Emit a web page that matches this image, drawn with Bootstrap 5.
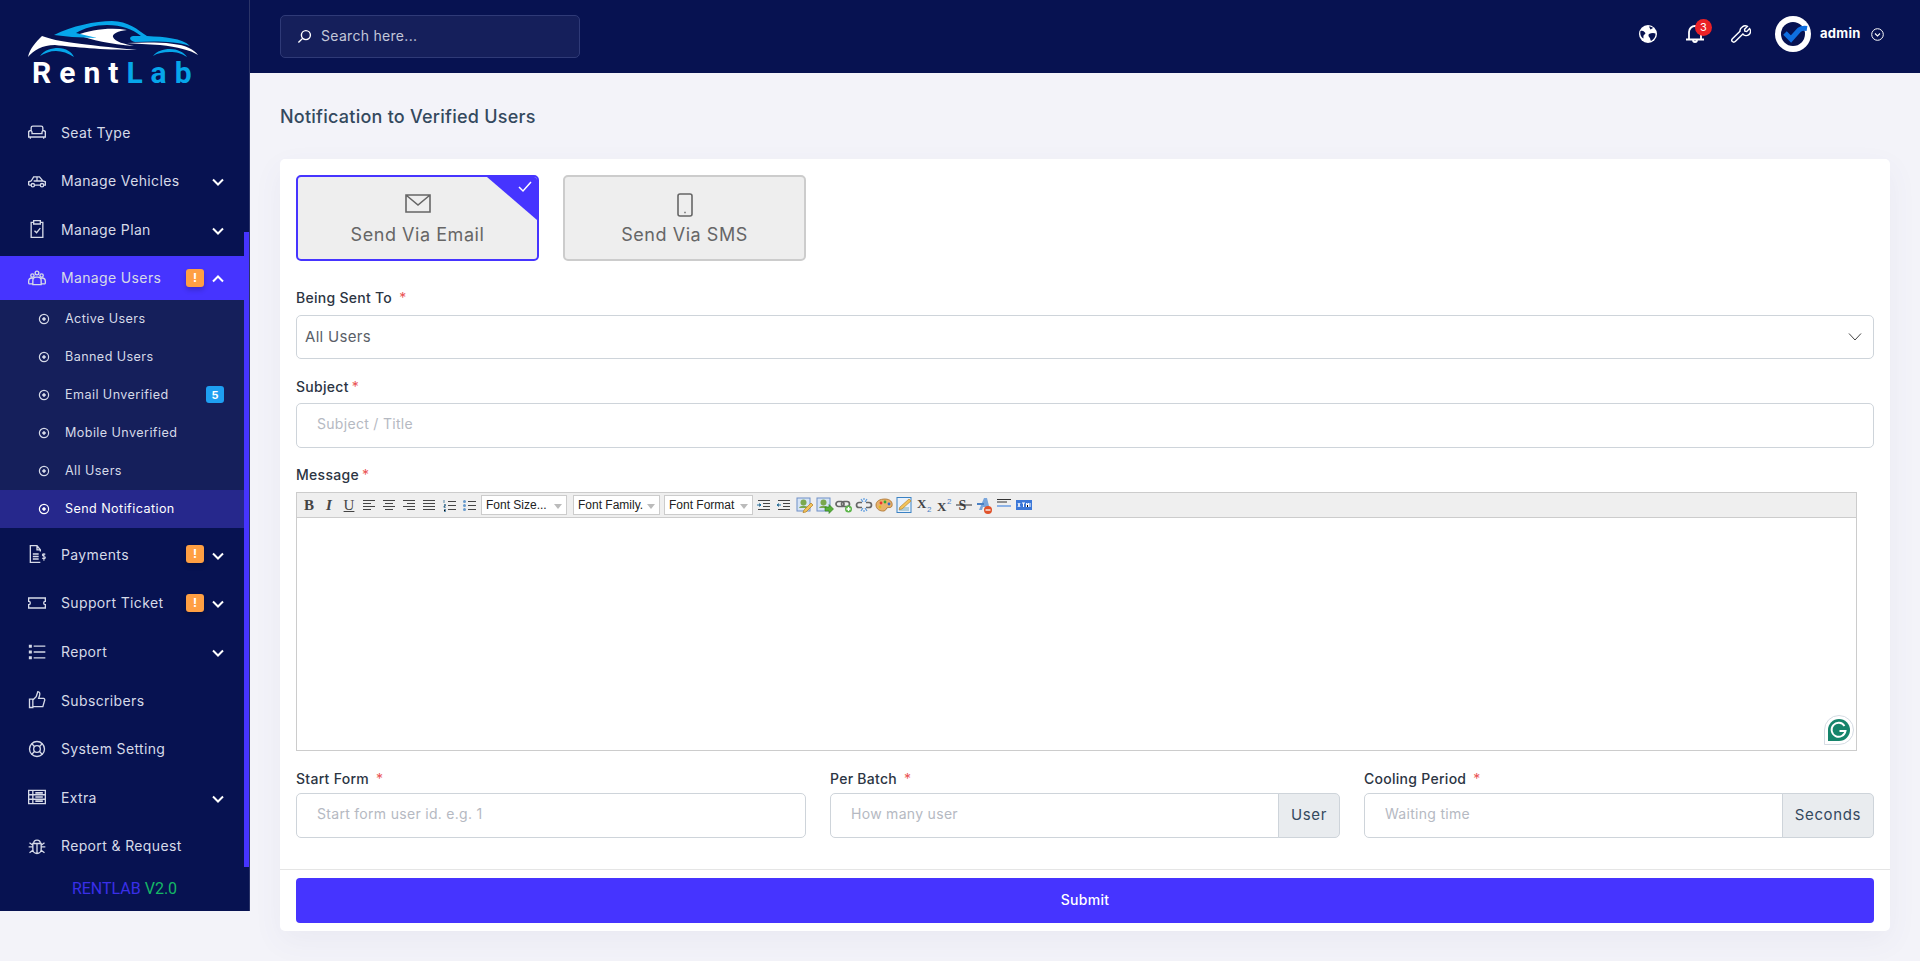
<!DOCTYPE html>
<html lang="en"><head><meta charset="utf-8"><title>RentLab</title>
<link href="https://cdn.jsdelivr.net/npm/bootstrap@5.3.0/dist/css/bootstrap.min.css" rel="stylesheet">
<style>
body{font-family:Inter,"Noto Sans",sans-serif;background:#f3f3f9;font-size:14px;color:#34495e;height:961px;overflow:hidden}
.side-panel{width:250px;height:911px;background:#071251;border-right:1px solid #2b3468;flex:none;position:relative}
.thumb-bar{position:absolute;right:0;top:232px;width:5px;height:635px;background:#4634ff}
.logo-box{height:110px;padding:20px 0 0 28px;display:block}
.logo-word{font-family:Roboto,sans-serif;font-weight:700;font-size:30px;line-height:28px;letter-spacing:8px;color:#fff;margin:-1px 0 0 4px}
.logo-word span{color:#06a6ea}
.side-row{width:244px;height:44px;margin-bottom:4.6px;padding-left:26px;display:flex;align-items:center;color:#d6dae8;font-size:14px;letter-spacing:.36px;text-decoration:none}
.side-row.is-open{background:#4634ff;margin-bottom:0}
.side-ic{width:22px;height:22px;margin-right:13px;flex:none;display:flex;align-items:center;justify-content:center}
.side-ic svg{width:20px;height:20px;fill:none;stroke:currentColor;stroke-width:1.6}
.chev{width:12px;height:8px;margin-left:auto;margin-right:20px;margin-top:3px;flex:none;fill:none;stroke:#fff;stroke-width:2}
.warn-tag{width:18px;height:18px;border-radius:3px;background:#ff9f43;color:#fff;font-size:12px;font-weight:700;display:flex;align-items:center;justify-content:center;margin-left:auto;margin-right:8px;box-shadow:0 3px 5px rgba(0,0,0,.2);letter-spacing:0}
.warn-tag + .chev{margin-left:0}
.sub-wrap{width:244px;background:#151f5b;margin-bottom:4.6px}
.sub-row{height:38px;padding:2px 0 0 38px;display:flex;align-items:center;color:#d6dae8;font-size:12.6px;letter-spacing:.42px;text-decoration:none}
.sub-row.is-on{background:#26288c;color:#fff}
.sub-dot{width:12px;height:12px;margin:-2px 15px 0 0;flex:none;fill:none;stroke:currentColor}
.info-tag{width:18px;height:17px;border-radius:3px;background:#1e9ff2;color:#fff;font-size:11px;font-weight:700;display:flex;align-items:center;justify-content:center;margin:-2px 20px 0 auto;letter-spacing:0}
.ver-line{font-family:Roboto,sans-serif;font-size:16px;text-align:center;color:#3a2fe8;margin-top:9px;line-height:24px;letter-spacing:0}
.ver-line span{color:#15b866}
.main-area{min-width:0}
.top-strip{height:73px;background:#071251;padding:0 30px;display:flex;align-items:center}
.find-box{width:300px;height:43px;margin-top:-1px;background:#151f5b;border:1px solid #2f3a77;border-radius:5px;padding:0 0 2px 16px;display:flex;align-items:center;color:#c3c7d9;letter-spacing:.3px}
.find-box svg{width:15px;height:15px;margin:2px 9px 0 0;fill:none;stroke:#fff;stroke-width:1.5}
.top-icons{margin:-5px 0 0 auto;position:relative;display:flex;align-items:center;height:40px}
.top-ic{display:block;fill:none;stroke:#fff}
.bell-count{position:absolute;left:57px;top:5px;width:17px;height:17px;border-radius:50%;background:#ea2127;color:#fff;font-size:11px;display:flex;align-items:center;justify-content:center}
.who{color:#fff;font-weight:700;font-size:13px;letter-spacing:.3px;margin:0 10.4px 0 9px}
.page-pad{padding:0 30px}
.page-title{font-size:18px;font-weight:500;letter-spacing:.24px;color:#34495e;line-height:27px;margin:29px 0 29px;padding-top:1px}
.form-panel{background:#fff;border-radius:5px;border:0;box-shadow:0 10px 30px rgba(90,90,130,.06);height:772px}
.panel-in{padding:16px 16px 0}
.way-box{width:243px;height:86px;border:2px solid #ccc;border-radius:5px;background:#eee;color:#666;display:flex;flex-direction:column;align-items:center;justify-content:flex-end;font-size:18px;letter-spacing:.55px;line-height:27px;position:relative;overflow:hidden;padding-bottom:11.5px}
.way-box.is-picked{border-color:#4634ff}
.way-box svg.way-ic{fill:none;stroke:#666;stroke-width:1.6}
.gap-mail{margin-bottom:7.5px}
.gap-phone{margin-bottom:4px}
.way-flag{position:absolute;right:0;top:0;width:50px;height:43px;background:#4634ff;clip-path:polygon(0 0,100% 0,100% 100%)}
.way-tick{position:absolute;right:4px;top:3px;width:16px;height:14px;fill:none;stroke:#fff;stroke-width:1.5}
.field-lab{display:block;font-size:14px;font-weight:500;letter-spacing:.28px;color:#2c3543;line-height:21px;margin-bottom:6.5px}
.field-lab.lab-tight{margin-bottom:4.5px}
.field-lab b{color:#ea5455;font-weight:400;margin-left:3px}
.gap-b{margin-bottom:16.5px}
.inp-x{height:44.5px;border-color:#ced4da;border-radius:5px;font-size:14px;padding:6px 12px 10px 20px;letter-spacing:.3px;color:#5b6e88}
.inp-x::placeholder{color:#b5b9c2}
.sel-x{height:44.5px;border-color:#ced4da;border-radius:5px;font-size:15px;padding-left:8px;color:#5a5f68;letter-spacing:.3px;background-size:16px 12px;background-position:right 10px center;background-image:url("data:image/svg+xml,%3csvg xmlns='http://www.w3.org/2000/svg' viewBox='0 0 16 12'%3e%3cpath fill='none' stroke='%23444' d='M2 2.5l6 6.5 6-6.5'/%3e%3c/svg%3e")}
.append-x{background:#e9ecef;border-color:#ced4da;font-size:15px;letter-spacing:.6px;color:#34495e;border-radius:0 5px 5px 0;padding:0 12px}
.edit-box{width:1561px;height:259px;border:1px solid #ccc;position:relative;background:#fff;margin-bottom:17px}
.edit-bar{height:25px;background:#efefef;border-bottom:1px solid #ccc;display:flex;align-items:center;padding-left:2px}
.tb-i{width:20px;height:20px;flex:none;display:block}
.tb-txt{width:20px;text-align:center;font:700 15px/20px "Liberation Serif",serif;color:#444;flex:none}
.tb-sel{height:20px;background:#fff;border:1px solid #ccc;font:12px/18px "Liberation Sans",sans-serif;color:#222;padding-left:4px;position:relative;flex:none;white-space:nowrap}
.tb-sel::after{content:"";position:absolute;right:4px;top:8px;border:4px solid transparent;border-top:5px solid #bbb;border-bottom:0}
.sel-a{width:86px;margin:0 6px 0 2px}
.sel-b{width:87px;margin-right:4px}
.sel-c{width:89px;margin-right:1px}
.gram-badge{position:absolute;right:2px;bottom:5px;width:30px;height:30px}
.foot-x{border-top:1px solid #e5e5e5;margin-top:31px;padding:8px 16px}
.go-btn{width:100%;height:45px;background:#4634ff;border:0;border-radius:4px;color:#fff;font-size:14px;font-weight:500;letter-spacing:.3px;padding-bottom:8px}
.go-btn:hover{background:#4634ff;color:#fff}
</style></head>
<body class="d-flex">
<aside class="side-panel">
 <div class="thumb-bar"></div>
 <a class="logo-box text-decoration-none" href="#">
  <svg width="172" height="40" viewBox="28 20 172 40">
   <path fill="#fff" d="M28 57C30 48 36 42 42 36C58 42 80 44 137 50C100 50 75 47 55 45C42 45 34 50 28 57Z"/>
   <path fill="#fff" d="M77 35C90 30 110 27 127 30C118 31 112 34 113 37C115 42 125 44 134 46C110 44 92 40 77 35Z"/>
   <path fill="#06a6ea" d="M54 35C72 26 95 21 112 21C128 21 138 30 147 36C165 37 182 38 190 46C175 41 155 41 135 42C130 41 128 37 133 36L141 36C132 29 122 25 107 25C95 25 84 28 76 33L97 38L72 37Z"/>
   <path fill="#fff" d="M127 43C150 42 178 42 189 48C193 50 196 52 198 55C190 50 178 47 160 45C148 44 135 44 127 43Z"/>
   <path fill="#06a6ea" d="M40 56C44 50 52 48 58 48C66 48 72 52 74 57C68 53 62 51 56 51C50 51 45 53 40 56Z"/>
   <path fill="#06a6ea" d="M153 56C157 51 163 49 170 49C177 49 184 52 187 57C181 53 176 52 170 52C163 52 158 53 153 56Z"/>
  </svg>
  <div class="logo-word">Rent<span>Lab</span></div>
 </a>
 <a class="side-row" href="#"><span class="side-ic"><svg viewBox="0 0 24 24"><path d="M5 11V7a2 2 0 0 1 2-2h10a2 2 0 0 1 2 2v4M2 13a2 2 0 0 1 4-1v2h12v-2a2 2 0 0 1 4 1v5H2zM2 18h20M4 18v2M20 18v2"/></svg></span>Seat Type</a>
 <a class="side-row" href="#"><span class="side-ic"><svg viewBox="0 0 24 24"><path d="M2 17v-4l3-1 3-5h7l4 5 3 1v4h-2M6 17H2M9 17h7M8 12h11M12 7v5"/><circle cx="7" cy="17" r="2"/><circle cx="18" cy="17" r="2"/></svg></span>Manage Vehicles<svg class="chev" viewBox="0 0 12 8"><path d="M1 1.5l5 5 5-5"/></svg></a>
 <a class="side-row" href="#"><span class="side-ic"><svg viewBox="0 0 24 24"><path d="M8 4H5v18h14V4h-3M8 2h8v4H8zM9 14l2.5 2.5L16 11"/></svg></span>Manage Plan<svg class="chev" viewBox="0 0 12 8"><path d="M1 1.5l5 5 5-5"/></svg></a>
 <a class="side-row is-open" href="#"><span class="side-ic"><svg viewBox="0 0 24 24"><circle cx="6.500" cy="9" r="2"/><circle cx="17.500" cy="9" r="2"/><circle cx="12" cy="6" r="2.200"/><path d="M2 19v-3a4 4 0 0 1 4-4h1M22 19v-3a4 4 0 0 0-4-4h-1M7 20v-5a4 4 0 0 1 4-4h2a4 4 0 0 1 4 4v5zM2 19h5M17 19h5"/></svg></span>Manage Users<span class="warn-tag">!</span><svg class="chev" viewBox="0 0 12 8"><path d="M1 6.5l5-5 5 5"/></svg></a>
 <div class="sub-wrap">
  <a class="sub-row" href="#"><svg class="sub-dot" viewBox="0 0 12 12"><circle cx="6" cy="6" r="4.6" stroke-width="1.2"/><circle cx="6" cy="6" r="1.3" fill="currentColor"/></svg>Active Users</a>
  <a class="sub-row" href="#"><svg class="sub-dot" viewBox="0 0 12 12"><circle cx="6" cy="6" r="4.6" stroke-width="1.2"/><circle cx="6" cy="6" r="1.3" fill="currentColor"/></svg>Banned Users</a>
  <a class="sub-row" href="#"><svg class="sub-dot" viewBox="0 0 12 12"><circle cx="6" cy="6" r="4.6" stroke-width="1.2"/><circle cx="6" cy="6" r="1.3" fill="currentColor"/></svg>Email Unverified<span class="info-tag">5</span></a>
  <a class="sub-row" href="#"><svg class="sub-dot" viewBox="0 0 12 12"><circle cx="6" cy="6" r="4.6" stroke-width="1.2"/><circle cx="6" cy="6" r="1.3" fill="currentColor"/></svg>Mobile Unverified</a>
  <a class="sub-row" href="#"><svg class="sub-dot" viewBox="0 0 12 12"><circle cx="6" cy="6" r="4.6" stroke-width="1.2"/><circle cx="6" cy="6" r="1.3" fill="currentColor"/></svg>All Users</a>
  <a class="sub-row is-on" href="#"><svg class="sub-dot" viewBox="0 0 12 12"><circle cx="6" cy="6" r="4.6" stroke-width="1.2"/><circle cx="6" cy="6" r="1.3" fill="currentColor"/></svg>Send Notification</a>
 </div>
 <a class="side-row" href="#"><span class="side-ic"><svg viewBox="0 0 24 24"><path d="M16 9V7l-4-5H4v20h12M12 2v5h4M7 12h7M7 15h7M7 18h7"/><path stroke-width="1.3" d="M22 12.500c-1-1-3.500-1-3.500.7 0 1.800 3.500 1 3.500 3 0 1.700-2.500 1.700-3.800.6M20.300 11v9"/></svg></span>Payments<span class="warn-tag">!</span><svg class="chev" viewBox="0 0 12 8"><path d="M1 1.500l5 5 5-5"/></svg></a>
 <a class="side-row" href="#"><span class="side-ic"><svg viewBox="0 0 24 24"><path d="M2 6h20v4a2 2 0 0 0 0 4v4H2v-4a2 2 0 0 0 0-4z"/></svg></span>Support Ticket<span class="warn-tag">!</span><svg class="chev" viewBox="0 0 12 8"><path d="M1 1.500l5 5 5-5"/></svg></a>
 <a class="side-row" href="#"><span class="side-ic"><svg viewBox="0 0 24 24" stroke-width="2"><path d="M8 5h14M8 12h14M8 19h14"/><path fill="currentColor" d="M3 4h2v2H3zM3 11h2v2H3zM3 18h2v2H3z"/></svg></span>Report<svg class="chev" viewBox="0 0 12 8"><path d="M1 1.500l5 5 5-5"/></svg></a>
 <a class="side-row" href="#"><span class="side-ic"><svg viewBox="0 0 24 24"><path d="M3 11h4v10H3zM7 12l4-4 2-6c2 0 3 2 2 5l-1 3h6a2 2 0 0 1 1 3l-2 7H7"/></svg></span>Subscribers</a>
 <a class="side-row" href="#"><span class="side-ic"><svg viewBox="0 0 24 24" stroke-width="2"><circle cx="12" cy="12" r="9"/><circle cx="12" cy="12" r="4"/><path d="M5.500 5.500l4 4M18.500 5.500l-4 4M5.500 18.500l4-4M18.500 18.500l-4-4"/></svg></span>System Setting</a>
 <a class="side-row" href="#"><span class="side-ic"><svg viewBox="0 0 24 24"><path d="M2 4h20v16H2zM2 9.300h20M2 14.700h20M7 4v16"/><path stroke-width="2" d="M10 7h9M10 12h9M10 17h9"/></svg></span>Extra<svg class="chev" viewBox="0 0 12 8"><path d="M1 1.500l5 5 5-5"/></svg></a>
 <a class="side-row" href="#"><span class="side-ic"><svg viewBox="0 0 24 24"><path d="M7 9h10v7a5 5 0 0 1-10 0zM8 9a4 4 0 0 1 8 0M12 9v12M2 13h5M17 13h5M3 8l4 3M21 8l-4 3M3 20l4-3M21 20l-4-3"/></svg></span>Report &amp; Request</a>
 <div class="ver-line">RENTLAB <span>V2.0</span></div>
</aside>
<div class="main-area flex-grow-1">
 <header class="top-strip">
  <div class="find-box"><svg viewBox="0 0 16 16"><circle cx="9.500" cy="6.500" r="4.800"/><path d="M6 10l-4.500 4.500"/></svg>Search here...</div>
  <div class="top-icons">
   <svg class="top-ic" width="20" height="20" viewBox="0 0 20 20" style="margin-right:27px"><circle cx="10" cy="10" r="9" fill="#fff" stroke="none"/><path fill="#071251" stroke="none" d="M2.500 7c1.500-.5 3 0 4 1s1.500 1.500 0 2.500-1 2.500-1 4C3 13.500 1.800 10 2.500 7zM11 10c2-1 4.500-1.500 6.500-.5.300 3-1.500 6-4.500 7.500-1-1.500-.5-2.500-1.500-3.500S10 11 11 10zM11 2.500c1.500 0 3 .5 4 1.500l-2.500 1.500z"/></svg>
   <svg class="top-ic" width="20" height="22" viewBox="0 0 20 22" stroke-width="1.800" style="margin-right:26px"><path d="M4 16V9a6 6 0 0 1 12 0v7M1 16.500h18M8 17a2 2 0 0 0 4 0"/></svg>
   <span class="bell-count">3</span>
   <svg class="top-ic" width="20" height="20" viewBox="0 0 20 20" stroke-width="1.500" style="margin-right:24px"><path d="M12.500 2.500a4.500 4.500 0 0 1 5.300-.5l-3 3 .3 2 2 .3 3-3A4.500 4.500 0 0 1 13 10L5 18a1.900 1.900 0 0 1-3-3l8-8c-.2-1.600.7-3.400 2.500-4.500z" transform="translate(-.5 .5) scale(.95)"/></svg>
   <svg width="36" height="36" viewBox="0 0 36 36"><circle cx="18" cy="18" r="18" fill="#fff"/><circle cx="18" cy="18" r="12" fill="#071251"/><path fill="none" stroke="#0f6fe0" stroke-width="5" d="M10 17l6 6 8-9c2-1.500 5-2 8-1.500"/></svg>
   <span class="who">admin</span>
   <svg class="top-ic" width="13" height="13" viewBox="0 0 13 13" style="margin-right:6px"><circle cx="6.500" cy="6.500" r="5.800"/><path stroke-width="1.100" d="M4 5.500l2.500 2.500L9 5.500"/></svg>
  </div>
 </header>
 <main class="page-pad">
  <h1 class="page-title">Notification to Verified Users</h1>
  <div class="card form-panel">
   <div class="panel-in">
    <div class="d-flex" style="gap:24px;margin-bottom:26px">
     <div class="way-box is-picked"><span class="way-flag"></span><svg class="way-tick" viewBox="0 0 16 14"><path d="M2 7l4 4 8-9"/></svg>
      <svg class="way-ic gap-mail" width="26" height="19" viewBox="0 0 26 19"><path d="M1 1h24v17H1zM1 1l12 10L25 1"/></svg>Send Via Email</div>
     <div class="way-box"><svg class="way-ic gap-phone" width="16" height="24" viewBox="0 0 16 24"><rect x="1" y="1" width="14" height="22" rx="2"/><path d="M7.300 19.500h1.400"/></svg>Send Via SMS</div>
    </div>
    <label class="field-lab">Being Sent To <b>*</b></label>
    <select class="form-select sel-x gap-b"><option>All Users</option></select>
    <label class="field-lab">Subject<b>*</b></label>
    <input class="form-control inp-x gap-b" placeholder="Subject / Title">
    <label class="field-lab">Message<b>*</b></label>
    <div class="edit-box">
     <div class="edit-bar">
      <span class="tb-txt">B</span><span class="tb-txt fst-italic">I</span><span class="tb-txt text-decoration-underline fw-normal">U</span>
      <svg class="tb-i" viewBox="0 0 20 20" stroke="#444"><path d="M4 5.500h12M4 8.500h8M4 11.500h12M4 14.500h8"/></svg>
      <svg class="tb-i" viewBox="0 0 20 20" stroke="#444"><path d="M4 5.500h12M6 8.500h8M4 11.500h12M6 14.500h8"/></svg>
      <svg class="tb-i" viewBox="0 0 20 20" stroke="#444"><path d="M4 5.500h12M8 8.500h8M4 11.500h12M8 14.500h8"/></svg>
      <svg class="tb-i" viewBox="0 0 20 20" stroke="#444"><path d="M4 5.500h12M4 8.500h12M4 11.500h12M4 14.500h12"/></svg>
      <svg class="tb-i" viewBox="0 0 20 20" stroke="#444"><path d="M9 6.500h8M9 10.500h8M9 14.500h8"/><path stroke="#58a" d="M5 5v3M5 9.500h1.500v1.500H5v1.500h1.500M5 14.500h1.500v2H5"/></svg>
      <svg class="tb-i" viewBox="0 0 20 20" stroke="#444"><path d="M9 6.500h8M9 10.500h8M9 14.500h8"/><circle cx="5.500" cy="6.500" r="1.500" fill="#69c" stroke="none"/><circle cx="5.500" cy="10.500" r="1.500" fill="#69c" stroke="none"/><circle cx="5.500" cy="14.500" r="1.500" fill="#69c" stroke="none"/></svg>
      <span class="tb-sel sel-a">Font Size...</span><span class="tb-sel sel-b">Font Family.</span><span class="tb-sel sel-c">Font Format</span>
      <svg class="tb-i" viewBox="0 0 20 20" stroke="#444"><path d="M4 5.500h12M9 8.500h7M9 11.500h7M4 14.500h12"/><path stroke="#27a" d="M3 10h4M5.500 8.500L7 10l-1.500 1.500"/></svg>
      <svg class="tb-i" viewBox="0 0 20 20" stroke="#444"><path d="M4 5.500h12M9 8.500h7M9 11.500h7M4 14.500h12"/><path stroke="#27a" d="M3 10h4M4.500 8.500L3 10l1.500 1.500"/></svg>
      <svg class="tb-i" viewBox="0 0 20 20"><rect x="3" y="3" width="13" height="13" fill="#d6e4f5" stroke="#6f8fc8"/><circle cx="9.500" cy="7.500" r="3" fill="#7aa84e"/><path fill="#7aa84e" d="M5 13c1-3 8-3 9 0z"/><path fill="#f3c35a" stroke="#b07b1f" stroke-width=".7" d="M10 15l7-7 2 2-7 7-3 .6z"/></svg>
      <svg class="tb-i" viewBox="0 0 20 20"><rect x="3" y="3" width="13" height="13" fill="#d6e4f5" stroke="#6f8fc8"/><circle cx="9.500" cy="7.500" r="3" fill="#7aa84e"/><path fill="#7aa84e" d="M5 13c1-3 8-3 9 0z"/><path fill="#58b03a" stroke="#2d7a1a" stroke-width=".6" d="M11 12h4v-2.500l4.500 4.500-4.500 4.500V16h-4z"/></svg>
      <svg class="tb-i" viewBox="0 0 20 20"><g fill="none" stroke="#666" stroke-width="1.700"><rect x="2" y="6.500" width="8" height="5" rx="2.500"/><rect x="7.500" y="6.500" width="8" height="5" rx="2.500"/></g><circle cx="14.500" cy="14" r="3.500" fill="#5cb54a"/><path stroke="#fff" stroke-width="1.300" d="M12.500 14h4M14.500 12v4"/></svg>
      <svg class="tb-i" viewBox="0 0 20 20"><g fill="none" stroke="#666" stroke-width="1.700"><path d="M8 7.500H5a2.500 2.500 0 0 0 0 5h3M12 7.500h3a2.500 2.500 0 0 1 0 5h-3"/></g><path stroke="#5b9be0" stroke-width="1.200" d="M7 4l2 3M13 4l-2 3M7 16l2-3M13 16l-2-3M10 3v2M10 15v2"/></svg>
      <svg class="tb-i" viewBox="0 0 20 20"><path fill="#e8b26a" stroke="#a86f2a" stroke-width=".8" d="M2 10c0-4 4-6 9-6s8 3 7 7c-.6 2-3 1.500-4 1.500-2 0-1.500 3-4 3.500-4 .5-8-2-8-6z"/><circle cx="7" cy="8" r="1.400" fill="#e33"/><circle cx="11" cy="7" r="1.400" fill="#3a3"/><circle cx="15" cy="9" r="1.400" fill="#36c"/><circle cx="6" cy="12" r="1.400" fill="#db2"/></svg>
      <svg class="tb-i" viewBox="0 0 20 20"><rect x="3" y="2.500" width="14" height="15" fill="#e8f1fb" stroke="#3b82c4"/><path stroke="#7ab" d="M5 13h10M5 15h10"/><path fill="#f3c35a" stroke="#b07b1f" stroke-width=".6" d="M6 12l9-8 2 2-9 8-3 .5z"/></svg>
      <svg class="tb-i" viewBox="0 0 20 20"><text x="3" y="13" font-family="Liberation Serif" font-weight="700" font-size="13" fill="#444">X</text><text x="13" y="17" font-family="Liberation Sans" font-size="8" fill="#4a80c4">2</text></svg>
      <svg class="tb-i" viewBox="0 0 20 20"><text x="3" y="16" font-family="Liberation Serif" font-weight="700" font-size="13" fill="#444">X</text><text x="13" y="9" font-family="Liberation Sans" font-size="8" fill="#4a80c4">2</text></svg>
      <svg class="tb-i" viewBox="0 0 20 20"><text x="4.500" y="15" font-family="Liberation Serif" font-weight="700" font-size="14" fill="#444">S</text><path stroke="#333" d="M2 10h16"/></svg>
      <svg class="tb-i" viewBox="0 0 20 20"><path fill="#7aa6dc" d="M5 15L10 3h3l3 12h-3l-1-3H9l-1 3z"/><path fill="#4a80c4" d="M3 8h7v2H3z"/><circle cx="14" cy="15" r="4" fill="#e0522a"/><path stroke="#fff" stroke-width="1.300" d="M11.500 15h5"/></svg>
      <svg class="tb-i" viewBox="0 0 20 20"><path stroke="#333" d="M3 4.500h14M3 7h10"/><path stroke="#8db2e6" stroke-width="2" d="M3 11h14"/></svg>
      <svg class="tb-i" viewBox="0 0 20 20"><rect x="2" y="5" width="16" height="10" fill="#3c78d8"/><path stroke="#fff" d="M4 8l2 4M6 8l-2 4M8 8h3M9.500 8v4M12.500 12V8l1 2 1-2v4M16 8v4"/></svg>
     </div>
     <svg class="gram-badge" viewBox="0 0 30 30"><path d="M15 .5a14.500 14.500 0 0 1 0 29H.5V15A14.500 14.500 0 0 1 15 .5z" fill="#fff" stroke="#d5dbe3"/><path d="M15 4a11 11 0 0 1 0 22H4V15A11 11 0 0 1 15 4z" fill="#15846b"/><path fill="none" stroke="#fff" stroke-width="1.900" d="M20.500 11a7 7 0 1 0 1 5h-6"/></svg>
    </div>
    <div class="row g-4" style="--bs-gutter-y:0">
     <div class="col-4"><label class="field-lab lab-tight">Start Form <b>*</b></label><input class="form-control inp-x" placeholder="Start form user id. e.g. 1"></div>
     <div class="col-4"><label class="field-lab lab-tight">Per Batch <b>*</b></label><div class="input-group"><input class="form-control inp-x" placeholder="How many user"><span class="input-group-text append-x">User</span></div></div>
     <div class="col-4"><label class="field-lab lab-tight">Cooling Period <b>*</b></label><div class="input-group"><input class="form-control inp-x" placeholder="Waiting time"><span class="input-group-text append-x">Seconds</span></div></div>
    </div>
   </div>
   <div class="foot-x"><button class="btn go-btn">Submit</button></div>
  </div>
 </main>
</div>
<script src="https://cdn.jsdelivr.net/npm/bootstrap@5.3.0/dist/js/bootstrap.bundle.min.js"></script>
</body></html>
